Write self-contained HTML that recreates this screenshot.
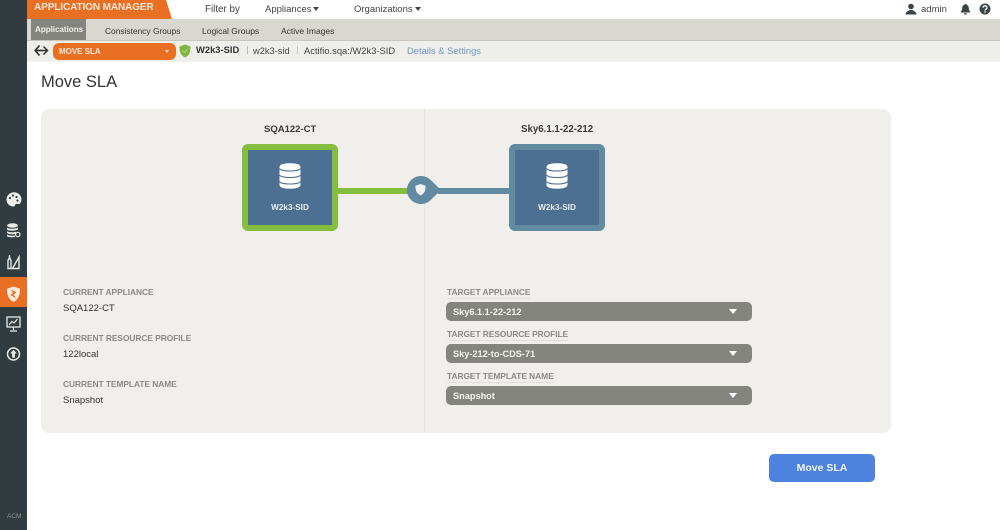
<!DOCTYPE html>
<html lang="en">
<head>
<meta charset="utf-8">
<title>Move SLA</title>
<style>
html,body{margin:0;padding:0;background:#fff}
body{width:1000px;height:530px;position:relative;overflow:hidden;font-family:"Liberation Sans",sans-serif;color:#333}
.a{position:absolute}
.t{position:absolute;white-space:nowrap;line-height:14px}
.lab{font-size:8.4px;font-weight:bold;color:#8a8a86;letter-spacing:-.05px}
.val{font-size:9.5px;color:#333}
.sel{position:absolute;left:446px;width:306px;height:19px;background:#858580;border-radius:5px}
.sel span{position:absolute;left:7px;top:3px;font-size:9.2px;font-weight:bold;line-height:14px;color:#f4f4f0;white-space:nowrap}
.sel i{position:absolute;left:283px;top:7px;width:0;height:0;border-left:4.5px solid transparent;border-right:4.5px solid transparent;border-top:5px solid #fff}
.box{position:absolute;top:144px;width:96px;height:87px;box-sizing:border-box;border-radius:6px;border-width:6px;border-style:solid;background:#4d6f92}
.box span{position:absolute;left:0;right:0;top:52px;text-align:center;font-size:8.2px;font-weight:bold;color:#e8edf2;line-height:12px}
.box svg{position:absolute;left:31px;top:13px}
.car{display:inline-block;width:0;height:0;border-left:3.5px solid transparent;border-right:3.5px solid transparent;border-top:4.5px solid #444;margin-left:2px;vertical-align:1px}
</style>
</head>
<body>
<!-- sidebar -->
<div class="a" style="left:0;top:0;width:27px;height:530px;background:#303c3f"></div>
<div class="a" style="left:0;top:277px;width:27px;height:30px;background:#e96f22"></div>
<svg class="a" style="left:0;top:190px" width="27" height="175" viewBox="0 0 27 175">
  <path d="M6.500 9.500a7.500 7 0 1 1 13.500 4c-1 1.200-2.700 0-4 .5-1.500.6-.5 2.500-2.500 2.500-4 0-7-3-7-7z" fill="#eef0ee"/>
  <circle cx="10" cy="8" r="1.100" fill="#303c3f"/><circle cx="13" cy="5.500" r="1.100" fill="#303c3f"/><circle cx="16.500" cy="7" r="1.100" fill="#303c3f"/><circle cx="17.500" cy="10.500" r="1.100" fill="#303c3f"/>
  <ellipse cx="12.500" cy="35.500" rx="5.500" ry="2.200" fill="#e8ebe8"/>
  <path d="M7 37.500c1 1.600 9 1.600 11 0v2c-2 1.600-10 1.600-11 0zM7 41c1 1.600 7 1.600 9 .8v2c-2 .8-8 .6-9-.8zM7 44.500c1 1.200 5 1.400 8 1v1.600c-3 .3-7 .2-8-1z" fill="#e8ebe8"/>
  <circle cx="17.800" cy="44.500" r="2.200" fill="none" stroke="#e8ebe8" stroke-width="1.200"/>
  <path d="M8 78.500v-8l1.500-3 1.500 3v8zM9.500 67v-2M12.500 78.500l6.500-11.500v11.500z" fill="none" stroke="#e8ebe8" stroke-width="1.400"/>
  <path d="M13.500 96.500l6.500 2.300c.2 6-1.500 10.500-6.500 13.200-5-2.700-6.700-7.200-6.500-13.200z" fill="#fbeadd"/>
  <path d="M11 99.500l5.500 3-3 2 2.500 4-5.500-3.500 2.500-2z" fill="#e96f22"/>
  <rect x="7" y="127" width="13" height="10" fill="none" stroke="#e8ebe8" stroke-width="1.300"/>
  <path d="M9 135l3-3.500 2 1.500 3.500-4M13.500 137v3M10 141h7" fill="none" stroke="#e8ebe8" stroke-width="1.200"/>
  <circle cx="13.500" cy="164" r="6" fill="none" stroke="#e8ebe8" stroke-width="1.500"/>
  <path d="M13.500 159.800l3.400 3.700h-2v4.300h-2.800v-4.300h-2z" fill="#e8ebe8"/>
</svg>
<div class="t" style="left:7px;top:510px;font-size:6.500px;color:#8b9392">ACM</div>

<!-- top bar -->
<svg class="a" style="left:27px;top:0" width="146" height="19"><path d="M0 0H139L145 19H0Z" fill="#e96f22"/></svg>
<div class="t" style="left:34px;top:1px;font-size:10px;color:#fbe6d7;font-weight:bold;letter-spacing:-.1px">APPLICATION MANAGER</div>
<div class="t" style="left:205px;top:3px;font-size:9.800px;color:#444">Filter by</div>
<div class="t" style="left:265px;top:3px;font-size:9.500px;color:#444">Appliances<i class="car"></i></div>
<div class="t" style="left:354px;top:3px;font-size:9.500px;color:#444">Organizations<i class="car"></i></div>
<svg class="a" style="left:905px;top:3px" width="12" height="12"><circle cx="6" cy="3.500" r="2.800" fill="#3c4447"/><path d="M.5 11.500c0-3 3-3.500 4-4.500h3c1 1 4 1.500 4 4.500z" fill="#3c4447"/></svg>
<div class="t" style="left:921px;top:3px;font-size:9.500px;color:#444">admin</div>
<svg class="a" style="left:960px;top:3px" width="11" height="12"><path d="M5.500 .8c.7 0 1 .5 1 1 1.800.5 2.300 2 2.300 3.700 0 1.500.7 2.500 1.500 3.300v.7H.7v-.7c.8-.8 1.500-1.800 1.500-3.300 0-1.700.5-3.200 2.300-3.700 0-.5.3-1 1-1z" fill="#3c4447"/><path d="M4 10.300h3a1.500 1.300 0 0 1-3 0z" fill="#3c4447"/></svg>
<svg class="a" style="left:979px;top:3px" width="12" height="12"><circle cx="6" cy="6" r="5.500" fill="#3c4447"/><path d="M4 4.700c0-2.500 4-2.500 4 0 0 1.500-2 1.500-2 2.800" fill="none" stroke="#fff" stroke-width="1.300"/><rect x="5.300" y="8.300" width="1.400" height="1.400" fill="#fff"/></svg>

<!-- tab bar -->
<div class="a" style="left:27px;top:19px;width:973px;height:22px;background:#d8d8d0;border-bottom:1px solid #c6c6be;box-sizing:border-box"></div>
<div class="a" style="left:31px;top:19px;width:55px;height:21px;background:#858580"></div>
<div class="t" style="left:35px;top:23px;font-size:8.200px;font-weight:bold;color:#eeeeea;letter-spacing:-.1px">Applications</div>
<div class="t" style="left:105px;top:24px;font-size:8.400px;color:#333">Consistency Groups</div>
<div class="t" style="left:202px;top:24px;font-size:8.500px;color:#333">Logical Groups</div>
<div class="t" style="left:281px;top:24px;font-size:8.500px;color:#333">Active Images</div>

<!-- sub bar -->
<div class="a" style="left:27px;top:41px;width:973px;height:21px;background:#eeeeea;border-bottom:1px solid #f2f2ee;box-sizing:border-box"></div>
<svg class="a" style="left:34px;top:44px" width="15" height="13"><path d="M5.500 1.500L1.200 6.500l4.300 5M2 6.500h6.500" fill="none" stroke="#333" stroke-width="1.700"/><path d="M9.500 2.500l4 4-4 4M8 6.500h5" fill="none" stroke="#333" stroke-width="1.500"/></svg>
<div class="a" style="left:53px;top:43px;width:123px;height:17px;background:#e96f22;border-radius:6px"></div>
<div class="t" style="left:59px;top:45px;font-size:8.100px;font-weight:bold;color:#fbe6d7;letter-spacing:-.1px">MOVE SLA</div>
<div class="a" style="left:165px;top:50px;width:0;height:0;border-left:2.500px solid transparent;border-right:2.500px solid transparent;border-top:3px solid #fbe6d7"></div>
<svg class="a" style="left:179px;top:44px" width="12" height="14"><path d="M6 .5l5.500 2c.2 5-1 9-5.500 11-4.500-2-5.700-6-5.500-11z" fill="#7fb744"/><path d="M3.500 6.500l2 2 3-3.500" fill="none" stroke="#a5cf78" stroke-width="1.300"/></svg>
<div class="t" style="left:196px;top:43px;font-size:9.400px;font-weight:bold;color:#333">W2k3-SID</div>
<div class="a" style="left:247px;top:46px;width:1px;height:8px;background:#b8b8b2"></div>
<div class="t" style="left:253px;top:44px;font-size:9.300px;color:#444">w2k3-sid</div>
<div class="a" style="left:297px;top:46px;width:1px;height:8px;background:#c8c8c2"></div>
<div class="t" style="left:304px;top:44px;font-size:9.400px;color:#444">Actifio.sqa:/W2k3-SID</div>
<div class="t" style="left:407px;top:44px;font-size:9.400px;color:#6f97cc">Details &amp; Settings</div>

<div class="t" style="left:41px;top:72px;font-size:16.500px;line-height:21px;color:#333">Move SLA</div>

<!-- panel -->
<div class="a" style="left:41px;top:109px;width:850px;height:324px;background:#f0efeb;border-radius:8px"></div>
<div class="a" style="left:424px;top:109px;width:1px;height:324px;background:#e5e5e1"></div>

<div class="t" style="left:264px;top:123px;font-size:9.500px;font-weight:bold;color:#3a3a3a">SQA122-CT</div>
<div class="t" style="left:521px;top:123px;font-size:9.700px;font-weight:bold;color:#3a3a3a">Sky6.1.1-22-212</div>

<div class="a" style="left:337px;top:188px;width:72px;height:6px;background:#84bd3f"></div>
<div class="a" style="left:438px;top:188px;width:72px;height:6px;background:#628ba1"></div>

<div class="box" style="left:242px;border-color:#84bd3f">
  <svg width="22" height="26" viewBox="0 0 22 26"><path d="M.5 4C.5 1.500 5 .3 11 .3S21.500 1.500 21.500 4v18c0 2.500-4.500 3.700-10.500 3.700S.5 24.500.5 22z" fill="#fff"/><path d="M.5 5.500c2 3.400 19 3.400 21 0M.5 12c2 3.400 19 3.400 21 0M.5 18.500c2 3.400 19 3.400 21 0" fill="none" stroke="#4d6f92" stroke-width="1"/></svg>
  <span>W2k3-SID</span>
</div>
<div class="box" style="left:509px;border-color:#628ba1">
  <svg width="22" height="26" viewBox="0 0 22 26"><path d="M.5 4C.5 1.500 5 .3 11 .3S21.500 1.500 21.500 4v18c0 2.500-4.500 3.700-10.500 3.700S.5 24.500.5 22z" fill="#fff"/><path d="M.5 5.500c2 3.400 19 3.400 21 0M.5 12c2 3.400 19 3.400 21 0M.5 18.500c2 3.400 19 3.400 21 0" fill="none" stroke="#4d6f92" stroke-width="1"/></svg>
  <span>W2k3-SID</span>
</div>

<svg class="a" style="left:405px;top:175px" width="36" height="30" viewBox="0 0 36 30">
  <path d="M16 1a14 14 0 0 1 9.500 3.800L36 15l-10.500 10.200A14 14 0 1 1 16 1z" fill="#628ba1"/>
  <path d="M15.500 9l5 1.800c.2 4.500-1 7.800-5 9.700-4-1.900-5.200-5.200-5-9.700z" fill="#f2f4f4"/>
</svg>

<!-- left fields -->
<div class="t lab" style="left:63px;top:285px">CURRENT APPLIANCE</div>
<div class="t val" style="left:63px;top:302px">SQA122-CT</div>
<div class="t lab" style="left:63px;top:331px">CURRENT RESOURCE PROFILE</div>
<div class="t val" style="left:63px;top:348px">122local</div>
<div class="t lab" style="left:63px;top:377px">CURRENT TEMPLATE NAME</div>
<div class="t val" style="left:63px;top:394px">Snapshot</div>

<!-- right fields -->
<div class="t lab" style="left:447px;top:286px;border-bottom:1px solid #e0e0dc;line-height:12px">TARGET APPLIANCE</div>
<div class="sel" style="top:302px"><span>Sky6.1.1-22-212</span><i></i></div>
<div class="t lab" style="left:447px;top:328px;border-bottom:1px solid #e0e0dc;line-height:12px">TARGET RESOURCE PROFILE</div>
<div class="sel" style="top:344px"><span>Sky-212-to-CDS-71</span><i></i></div>
<div class="t lab" style="left:447px;top:370px;border-bottom:1px solid #e0e0dc;line-height:12px">TARGET TEMPLATE NAME</div>
<div class="sel" style="top:386px"><span>Snapshot</span><i></i></div>

<!-- button -->
<div class="a" style="left:769px;top:454px;width:106px;height:28px;background:#4d82de;border-radius:5px;color:#f2f6fd;font-size:10.500px;font-weight:bold;line-height:28px;text-align:center">Move SLA</div>
</body>
</html>
